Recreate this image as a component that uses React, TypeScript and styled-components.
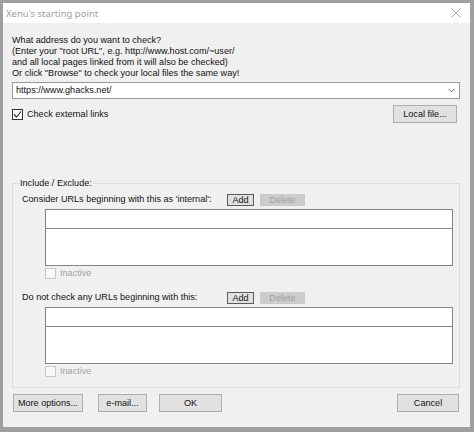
import React from 'react';
import styled, { createGlobalStyle } from 'styled-components';

const GlobalStyle = createGlobalStyle`
    html,
    body {
        margin: 0;
        padding: 0;
        background: #9f9f9f;
    }
    body {
        font-family: 'Liberation Sans', Arial, sans-serif;
    }
`;

const Desktop = styled.div`
    width: 474px;
    height: 432px;
    padding: 3px 4px 5px 3px;
    box-sizing: border-box;
    display: flex;
`;

const Window = styled.div`
    flex: 1;
    display: flex;
    flex-direction: column;
    background: #f0f0f0;
`;

const TitleBar = styled.div`
    height: 20px;
    flex: none;
    background: #fff;
    display: flex;
    align-items: center;
    justify-content: space-between;
    padding: 0 9px 0 3px;
    font-family: 'Noto Sans', sans-serif;
    font-size: 9.5px;
    color: #a69d9d;
`;

const Body = styled.div`
    flex: 1;
    display: flex;
    flex-direction: column;
    padding: 12px 10px 15px 9px;
    font-size: 9.1px;
    line-height: 11px;
    color: #111;
`;

const Intro = styled.div`
    height: 44px;
`;

const Combo = styled.div`
    margin-top: 3px;
    height: 17px;
    box-sizing: border-box;
    border: 1px solid #9a9a9a;
    background: #fff;
    display: flex;
    align-items: center;
    justify-content: space-between;
    padding: 0 4px 0 3px;
`;

const CheckRow = styled.div`
    margin-top: 6px;
    height: 18px;
    display: flex;
    align-items: center;
    justify-content: space-between;
`;

const CheckLabel = styled.label<{ $disabled?: boolean }>`
    display: flex;
    align-items: center;
    gap: 4px;
    color: ${(p) => (p.$disabled ? '#a3a3a3' : '#111')};
`;

const Box = styled.span<{ $disabled?: boolean }>`
    width: 11px;
    height: 11px;
    box-sizing: border-box;
    border: 1px solid ${(p) => (p.$disabled ? '#c8c8c8' : '#333')};
    background: ${(p) => (p.$disabled ? '#f9f9f9' : '#fff')};
    display: flex;
    align-items: center;
    justify-content: center;
`;

const Button = styled.button<{ $w: number }>`
    width: ${(p) => p.$w}px;
    height: 18px;
    box-sizing: border-box;
    padding: 0;
    border: 1px solid #adadad;
    background: #e1e1e1;
    color: #111;
    font: inherit;
`;

const LocalButton = styled(Button)`
    margin-right: 3px;
`;

const Group = styled.fieldset`
    margin: 55px 0 0 0;
    padding: 4px 6px 10px 0;
    border: 1px solid #dcdcdc;
    min-width: 0;
`;

const Legend = styled.legend`
    margin-left: 6px;
    padding: 0 1px;
    line-height: 11px;
`;

const SectionRow = styled.div<{ $top: number }>`
    margin-top: ${(p) => p.$top}px;
    height: 13px;
    display: flex;
    align-items: center;
    padding-left: 9px;
`;

const SectionLabel = styled.span`
    width: 205px;
    white-space: nowrap;
`;

const SmallButton = styled.button<{ $w: number; $disabled?: boolean }>`
    width: ${(p) => p.$w}px;
    height: 12px;
    box-sizing: border-box;
    padding: 0;
    margin-right: 6px;
    border: 1px solid ${(p) => (p.$disabled ? '#cccccc' : '#5a5a5a')};
    background: ${(p) => (p.$disabled ? '#cccccc' : '#e1e1e1')};
    color: ${(p) => (p.$disabled ? '#a0a0a0' : '#111')};
    font: inherit;
    line-height: 10px;
`;

const List = styled.div`
    margin: 3px 0 0 32px;
    height: 57px;
    box-sizing: border-box;
    border: 1px solid #848484;
    background: #fff;
    display: flex;
    flex-direction: column;
`;

const ListEdit = styled.div`
    height: 18px;
    border-bottom: 1px solid #8a8a8a;
`;

const InactiveRow = styled.div`
    margin: 2px 0 0 32px;
    height: 11px;
    display: flex;
    align-items: center;
`;

const Footer = styled.div`
    margin-top: 6px;
    display: flex;
    align-items: center;
    padding: 0 1px;
`;

const FooterButton = styled(Button)<{ $gap?: number }>`
    margin-left: ${(p) => p.$gap ?? 0}px;
`;

const CancelButton = styled(Button)`
    margin-left: auto;
`;

const CloseIcon = () => (
    <svg width="10" height="10" viewBox="0 0 10 10">
        <path d="M0.5 0.5 L9.5 9.5 M9.5 0.5 L0.5 9.5" stroke="#a8a8a8" strokeWidth="1" fill="none" />
    </svg>
);

const Chevron = () => (
    <svg width="7" height="5" viewBox="0 0 7 5">
        <path d="M0.5 0.8 L3.5 3.8 L6.5 0.8" stroke="#666" strokeWidth="1" fill="none" />
    </svg>
);

const CheckBox: React.FC<{ checked?: boolean; disabled?: boolean }> = ({ checked, disabled }) => (
    <Box $disabled={disabled}>
        {checked && (
            <svg width="9" height="9" viewBox="0 0 9 9">
                <path d="M1 4.5 L3.5 7 L8 1.5" stroke="#222" strokeWidth="1.1" fill="none" />
            </svg>
        )}
    </Box>
);

const UrlSection: React.FC<{ label: string; top: number }> = ({ label, top }) => (
    <>
        <SectionRow $top={top}>
            <SectionLabel>{label}</SectionLabel>
            <SmallButton $w={27}>Add</SmallButton>
            <SmallButton $w={45} $disabled>
                Delete
            </SmallButton>
        </SectionRow>
        <List>
            <ListEdit />
        </List>
        <InactiveRow>
            <CheckLabel $disabled>
                <CheckBox disabled />
                Inactive
            </CheckLabel>
        </InactiveRow>
    </>
);

const App: React.FC = () => {
    return (
        <>
            <GlobalStyle />
            <Desktop>
                <Window>
                    <TitleBar>
                        <span>Xenu&apos;s starting point</span>
                        <CloseIcon />
                    </TitleBar>
                    <Body>
                        <Intro>
                            What address do you want to check?
                            <br />
                            (Enter your &quot;root URL&quot;, e.g. http://www.host.com/~user/
                            <br />
                            and all local pages linked from it will also be checked)
                            <br />
                            Or click &quot;Browse&quot; to check your local files the same way!
                        </Intro>
                        <Combo>
                            <span>https://www.ghacks.net/</span>
                            <Chevron />
                        </Combo>
                        <CheckRow>
                            <CheckLabel>
                                <CheckBox checked />
                                Check external links
                            </CheckLabel>
                            <LocalButton $w={64}>Local file...</LocalButton>
                        </CheckRow>
                        <Group>
                            <Legend>Include / Exclude:</Legend>
                            <UrlSection label="Consider URLs beginning with this as 'internal':" top={0} />
                            <UrlSection label="Do not check any URLs beginning with this:" top={12} />
                        </Group>
                        <Footer>
                            <FooterButton $w={70}>More options...</FooterButton>
                            <FooterButton $w={49} $gap={15}>
                                e-mail...
                            </FooterButton>
                            <FooterButton $w={63} $gap={12}>
                                OK
                            </FooterButton>
                            <CancelButton $w={62}>Cancel</CancelButton>
                        </Footer>
                    </Body>
                </Window>
            </Desktop>
        </>
    );
};

export default App;
